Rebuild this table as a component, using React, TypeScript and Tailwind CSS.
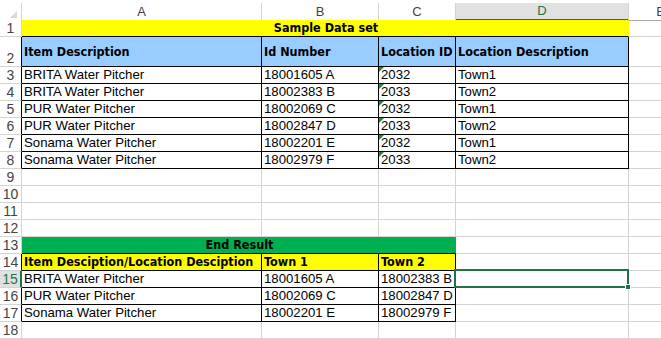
import React from "react";

const COLS = "grid grid-cols-[22px_240px_117px_77px_173px_64px]";
const DATA_FONT = "font-['Liberation_Sans',Arial,sans-serif] text-[13.2px] leading-[16px] text-black";
const BOLD_FONT = "font-['DejaVu_Sans_Condensed','DejaVu_Sans',sans-serif] font-stretch-condensed font-bold text-[12.5px] leading-[16px] text-black";
const CELL = "relative box-border flex items-center overflow-visible whitespace-nowrap pl-[2px] border-r border-b";
const GRID = "border-r-[#d4d4d4] border-b-[#d4d4d4]";
const BLACK = "border-r-black border-b-black";
const RH = "box-border flex items-end justify-center border-r border-b border-b-[#d4d4d4] font-['Liberation_Sans',Arial,sans-serif] text-[14px] leading-[16px] text-[#444]";
const RH_GRAY = "border-r-[#d4d4d4] bg-white";
const RH_BLACK = "border-r-black bg-white";
const CH = "box-border flex items-center justify-center border-r border-r-[#d4d4d4] border-b font-['Liberation_Sans',Arial,sans-serif] text-[13px] leading-[16px]";

function Tri() {
  return (
    <svg className="absolute left-0 top-0" width="5" height="5" viewBox="0 0 5 5">
      <polygon points="0,0 5,0 0,5" fill="#1e8a3a" />
    </svg>
  );
}

function Empty({ r }: { r: number }) {
  return (
    <div className={COLS + " h-[17px]"}>
      <div className={RH + " " + RH_GRAY}>{r}</div>
      <div className={CELL + " " + GRID}></div>
      <div className={CELL + " " + GRID}></div>
      <div className={CELL + " " + GRID}></div>
      <div className={CELL + " " + GRID}></div>
      <div className={CELL + " " + GRID}></div>
    </div>
  );
}

const data = [
  ["BRITA Water Pitcher", "18001605 A", "2032", "Town1"],
  ["BRITA Water Pitcher", "18002383 B", "2033", "Town2"],
  ["PUR Water Pitcher", "18002069 C", "2032", "Town1"],
  ["PUR Water Pitcher", "18002847 D", "2033", "Town2"],
  ["Sonama Water Pitcher", "18002201 E", "2032", "Town1"],
  ["Sonama Water Pitcher", "18002979 F", "2033", "Town2"],
];

const result = [
  ["BRITA Water Pitcher", "18001605 A", "18002383 B"],
  ["PUR Water Pitcher", "18002069 C", "18002847 D"],
  ["Sonama Water Pitcher", "18002201 E", "18002979 F"],
];

export default function App() {
  return (
    <div className="w-[661px] h-[339px] overflow-hidden bg-white">
      {/* Column headers */}
      <div className="pt-[3px] bg-white">
        <div className={COLS + " h-[17px]"}>
          <div className="box-border flex items-end justify-end pr-[4px] pb-[2px] border-r border-r-[#d4d4d4] border-b border-b-[#ababab]">
            <svg width="7" height="7" viewBox="0 0 7 7">
              <polygon points="7,0 7,7 0,7" fill="#d9d9d9" />
            </svg>
          </div>
          <div className={CH + " border-b-[#ababab] text-[#444]"}>A</div>
          <div className={CH + " border-b-[#ababab] text-[#444]"}>B</div>
          <div className={CH + " border-b-[#ababab] text-[#444]"}>C</div>
          <div className={CH + " border-b-2 border-b-[#217346] bg-[#e1e1e1] text-[#217346]"}>D</div>
          <div className={CH + " border-b-[#ababab] text-[#444]"}>E</div>
        </div>
      </div>

      {/* Row 1 */}
      <div className={COLS + " h-[17px]"}>
        <div className={RH + " " + RH_GRAY}>1</div>
        <div className={CELL + " col-span-4 justify-center bg-[#ffff00] border-r-[#ffff00] border-b-black " + BOLD_FONT}>
          Sample Data set
        </div>
        <div className={CELL + " " + GRID}></div>
      </div>

      {/* Row 2 */}
      <div className={COLS + " h-[30px]"}>
        <div className={RH + " " + RH_BLACK}>2</div>
        <div className={CELL + " bg-[#99ccff] " + BLACK + " " + BOLD_FONT}>Item Description</div>
        <div className={CELL + " bg-[#99ccff] " + BLACK + " " + BOLD_FONT}>Id Number</div>
        <div className={CELL + " bg-[#99ccff] " + BLACK + " " + BOLD_FONT}>Location ID</div>
        <div className={CELL + " bg-[#99ccff] " + BLACK + " " + BOLD_FONT}>Location Description</div>
        <div className={CELL + " " + GRID}></div>
      </div>

      {/* Rows 3-8 */}
      {data.map((row, i) => (
        <div key={i} className={COLS + " h-[17px]"}>
          <div className={RH + " " + RH_BLACK}>{i + 3}</div>
          <div className={CELL + " " + BLACK + " " + DATA_FONT}>{row[0]}</div>
          <div className={CELL + " " + BLACK + " " + DATA_FONT}>{row[1]}</div>
          <div className={CELL + " pl-[1px] " + BLACK + " " + DATA_FONT}>
            <Tri />
            {row[2]}
          </div>
          <div className={CELL + " " + BLACK + " " + DATA_FONT}>{row[3]}</div>
          <div className={CELL + " " + GRID}></div>
        </div>
      ))}

      <Empty r={9} />
      <Empty r={10} />
      <Empty r={11} />
      <Empty r={12} />

      {/* Row 13 */}
      <div className={COLS + " h-[17px]"}>
        <div className={RH + " " + RH_GRAY}>13</div>
        <div className={CELL + " col-span-3 justify-center bg-[#00b050] border-r-[#00b050] border-b-black " + BOLD_FONT}>
          End Result
        </div>
        <div className={CELL + " " + GRID}></div>
        <div className={CELL + " " + GRID}></div>
      </div>

      {/* Row 14 */}
      <div className={COLS + " h-[17px]"}>
        <div className={RH + " " + RH_BLACK}>14</div>
        <div className={CELL + " bg-[#ffff00] " + BLACK + " " + BOLD_FONT}>Item Desciption/Location Desciption</div>
        <div className={CELL + " bg-[#ffff00] " + BLACK + " " + BOLD_FONT}>Town 1</div>
        <div className={CELL + " bg-[#ffff00] " + BLACK + " " + BOLD_FONT}>Town 2</div>
        <div className={CELL + " " + GRID}></div>
        <div className={CELL + " " + GRID}></div>
      </div>

      {/* Rows 15-17 */}
      {result.map((row, i) => (
        <div key={i} className={COLS + " h-[17px]"}>
          {i === 0 ? (
            <div className={RH + " border-r-2 border-r-[#217346] bg-[#e1e1e1] text-[#217346]"}>15</div>
          ) : (
            <div className={RH + " " + RH_BLACK}>{i + 15}</div>
          )}
          <div className={CELL + " " + BLACK + " " + DATA_FONT}>{row[0]}</div>
          <div className={CELL + " " + BLACK + " " + DATA_FONT}>{row[1]}</div>
          <div className={CELL + " " + BLACK + " " + DATA_FONT}>{row[2]}</div>
          <div className={CELL + " " + GRID}>
            {i === 0 && (
              <>
                <div className="absolute left-[-2px] top-[-2px] right-[-1px] bottom-[-1px] border-2 border-[#217346] z-10"></div>
                <div className="absolute right-[-3px] bottom-[-3px] w-[6px] h-[6px] bg-[#217346] border border-white z-20"></div>
              </>
            )}
          </div>
          <div className={CELL + " " + GRID}></div>
        </div>
      ))}

      <Empty r={18} />
    </div>
  );
}
